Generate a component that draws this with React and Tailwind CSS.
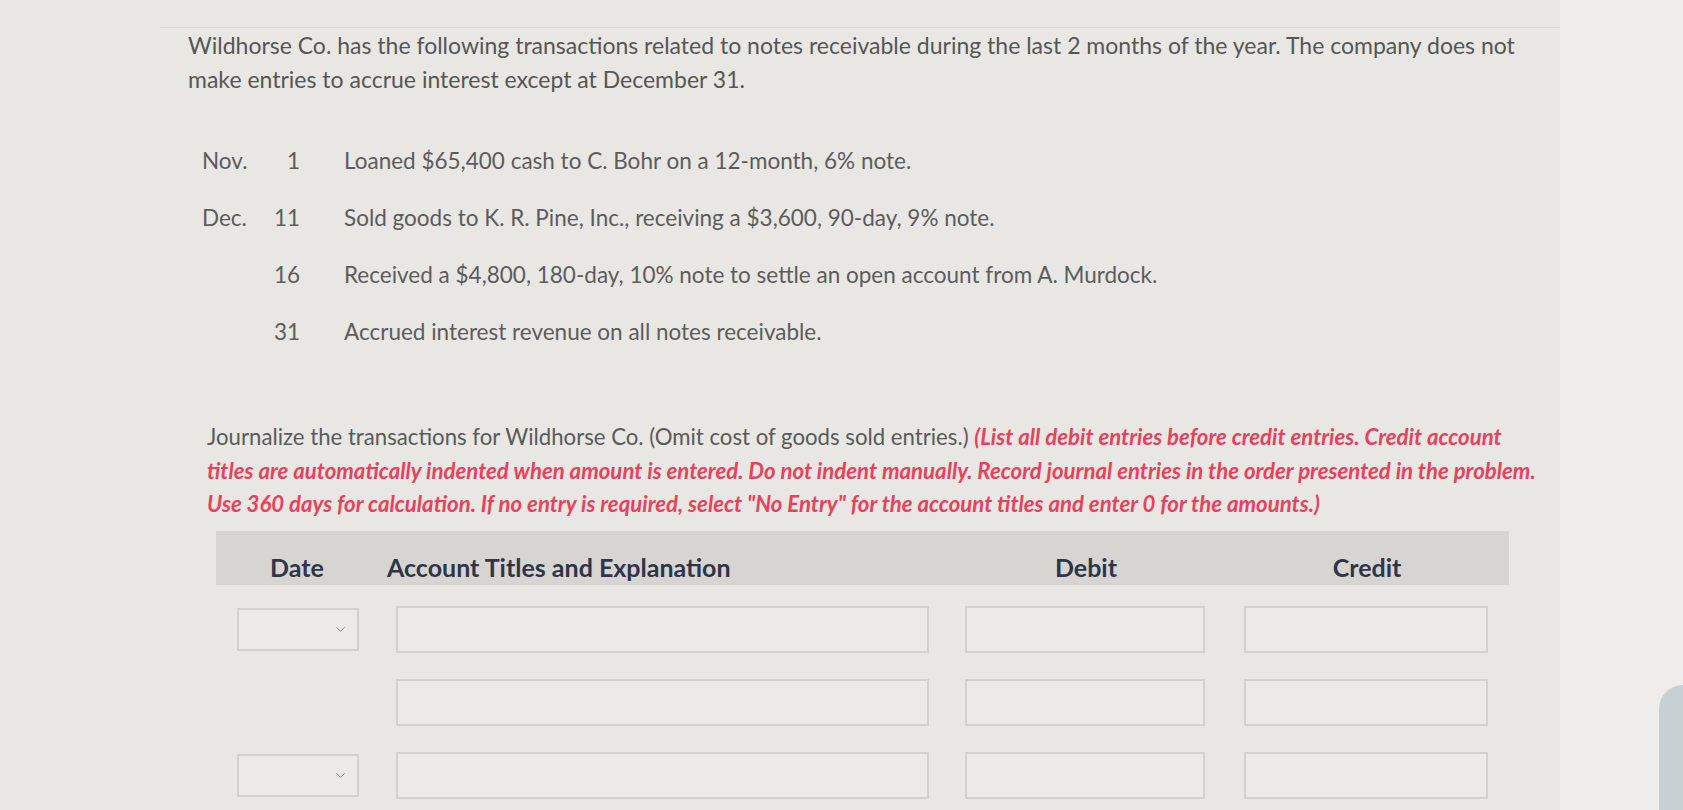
import React from 'react';
import { ChevronDown } from 'lucide-react';

const transactions = [
  { month: 'Nov.', day: '1', text: 'Loaned $65,400 cash to C. Bohr on a 12-month, 6% note.' },
  { month: 'Dec.', day: '11', text: 'Sold goods to K. R. Pine, Inc., receiving a $3,600, 90-day, 9% note.' },
  { month: '', day: '16', text: 'Received a $4,800, 180-day, 10% note to settle an open account from A. Murdock.' },
  { month: '', day: '31', text: 'Accrued interest revenue on all notes receivable.' },
];

const rows = [
  { date: true },
  { date: false },
  { date: true },
];

const Box = ({ className = '' }) => (
  <div className={`h-[47px] border-2 border-[#d2d1ce] bg-[#ebeae7] ${className}`}></div>
);

export default function App() {
  return (
    <div
      className="min-h-screen w-full bg-[#e8e7e3] text-[#565656] overflow-hidden"
      style={{ fontFamily: 'Lato, "Open Sans", sans-serif' }}
    >
      <div className="flex">
        <div className="w-[1560px] shrink-0">
          <div className="h-[28px] border-b border-[#d9d8d4] ml-[160px]"></div>

          {/* Intro */}
          <p className="pl-[188px] text-[23px] leading-[34px]">
            Wildhorse Co. has the following transactions related to notes receivable during the last 2 months of the year. The company does not
            <br />
            make entries to accrue interest except at December 31.
          </p>

          {/* Transactions */}
          <div className="pl-[202px] pt-[48px] flex flex-col gap-[23px] text-[22.5px] leading-[34px] text-[#5c5c5c]">
            {transactions.map((t, i) => (
              <div key={i} className="flex">
                <div className="w-[66px]">{t.month}</div>
                <div className="w-[32px] text-right">{t.day}</div>
                <div className="pl-[44px]">{t.text}</div>
              </div>
            ))}
          </div>

          {/* Instructions */}
          <p className="pl-[207px] pt-[71px] text-[22.2px] leading-[33.5px] text-[#5a5a5a]">
            Journalize the transactions for Wildhorse Co. (Omit cost of goods sold entries.){' '}
            <em className="font-bold text-[#e8415c]">
              (List all debit entries before credit entries. Credit account
              <br />
              titles are automatically indented when amount is entered. Do not indent manually. Record journal entries in the order presented in the problem.
              <br />
              Use 360 days for calculation. If no entry is required, select "No Entry" for the account titles and enter 0 for the amounts.)
            </em>
          </p>

          {/* Journal table */}
          <div className="ml-[216px] mt-[10px] w-[1293px]">
            <div className="h-[54px] bg-[#d6d5d2] flex items-center pt-[18px] text-[25px] leading-[30px] font-bold text-[#2f3548]">
              <div className="w-[171px] pl-[54px]">Date</div>
              <div className="w-[579px]">Account Titles and Explanation</div>
              <div className="w-[240px] text-center">Debit</div>
              <div className="w-[39px]"></div>
              <div className="w-[244px] text-center">Credit</div>
            </div>

            <div className="flex flex-col gap-[26px] pt-[21px]">
              {rows.map((r, i) => (
                <div key={i} className="flex items-center">
                  <div className="w-[180px] pl-[21px]">
                    {r.date && (
                      <div className="w-[122px] h-[43px] border-2 border-[#d2d1ce] bg-[#ebeae7] flex items-center justify-end pr-[9px]">
                        <ChevronDown size={15} strokeWidth={1.5} className="text-[#7d7d7d]" />
                      </div>
                    )}
                  </div>
                  <Box className="w-[533px]" />
                  <Box className="w-[240px] ml-[36px]" />
                  <Box className="w-[244px] ml-[39px]" />
                </div>
              ))}
            </div>
          </div>
        </div>

        {/* right edge of the photographed screen */}
        <div className="flex-1 bg-[#eeedea] min-h-screen relative">
          <div className="absolute right-0 bottom-0 w-[24px] h-[125px] rounded-tl-[28px] bg-[#c7d1d3]"></div>
        </div>
      </div>
    </div>
  );
}
